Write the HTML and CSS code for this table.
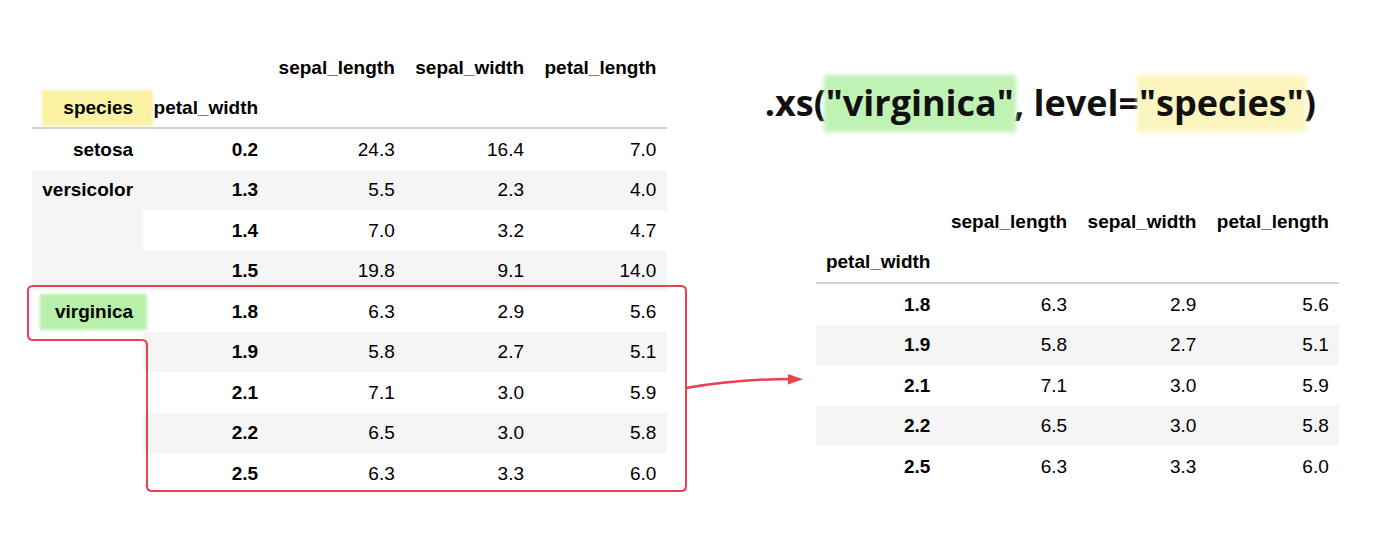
FILE: index.html
```html
<!DOCTYPE html>
<html lang="en">
<head>
<meta charset="utf-8">
<title>xs virginica</title>
<link rel="stylesheet" href="styles.css">
</head>
<body>
<main class="stage">
  <section class="left">
    <table class="df">
      <thead>
        <tr class="hdr1">
          <th></th><th></th>
          <th>sepal_length</th><th>sepal_width</th><th>petal_length</th>
        </tr>
        <tr class="hdr2">
          <th><span class="hl hl-yellow">species</span></th><th>petal_width</th>
          <th></th><th></th><th></th>
        </tr>
      </thead>
      <tbody>
        <tr><th>setosa</th><th>0.2</th><td>24.3</td><td>16.4</td><td>7.0</td></tr>
        <tr><th rowspan="3" class="span">versicolor</th><th>1.3</th><td>5.5</td><td>2.3</td><td>4.0</td></tr>
        <tr><th>1.4</th><td>7.0</td><td>3.2</td><td>4.7</td></tr>
        <tr><th>1.5</th><td>19.8</td><td>9.1</td><td>14.0</td></tr>
        <tr><th rowspan="5" class="span"><span class="hl hl-green">virginica</span></th><th>1.8</th><td>6.3</td><td>2.9</td><td>5.6</td></tr>
        <tr><th>1.9</th><td>5.8</td><td>2.7</td><td>5.1</td></tr>
        <tr><th>2.1</th><td>7.1</td><td>3.0</td><td>5.9</td></tr>
        <tr><th>2.2</th><td>6.5</td><td>3.0</td><td>5.8</td></tr>
        <tr><th>2.5</th><td>6.3</td><td>3.3</td><td>6.0</td></tr>
      </tbody>
    </table>
  </section>

  <section class="right">
    <div class="code">.xs(<span class="chl chl-green">"virginica"</span>, level=<span class="chl chl-yellow">"species"</span>)</div>
    <table class="df df-right">
      <thead>
        <tr class="hdr1">
          <th></th>
          <th>sepal_length</th><th>sepal_width</th><th>petal_length</th>
        </tr>
        <tr class="hdr2">
          <th>petal_width</th><th></th><th></th><th></th>
        </tr>
      </thead>
      <tbody>
        <tr><th>1.8</th><td>6.3</td><td>2.9</td><td>5.6</td></tr>
        <tr><th>1.9</th><td>5.8</td><td>2.7</td><td>5.1</td></tr>
        <tr><th>2.1</th><td>7.1</td><td>3.0</td><td>5.9</td></tr>
        <tr><th>2.2</th><td>6.5</td><td>3.0</td><td>5.8</td></tr>
        <tr><th>2.5</th><td>6.3</td><td>3.3</td><td>6.0</td></tr>
      </tbody>
    </table>
  </section>

  <svg class="annot" width="1400" height="536" viewBox="0 0 1400 536" aria-hidden="true">
    <path d="M33 286 H681 Q686 286 686 291 V486 Q686 491 681 491 H152 Q147 491 147 486 V345 Q147 340 142 340 H33 Q28 340 28 335 V291 Q28 286 33 286 Z" fill="none" stroke="#e8424f" stroke-width="2"/>
    <path d="M686 388 C715 383 745 379 790 379" fill="none" stroke="#e8424f" stroke-width="2.5"/>
    <polygon points="788,374 803,379.3 788,384.5" fill="#e8424f"/>
  </svg>
</main>
</body>
</html>
```

FILE: styles.css
```css
html, body {
  margin: 0;
  padding: 0;
  background: #ffffff;
}

.stage {
  position: relative;
  display: flex;
  align-items: flex-start;
  width: 1400px;
  height: 536px;
  box-sizing: border-box;
  padding: 47px 0 0 32px;
  font-family: "Liberation Sans", Arial, sans-serif;
  color: #000;
  overflow: hidden;
}

.df {
  border-collapse: collapse;
  border-spacing: 0;
  font-size: 19px;
}

.df th,
.df td {
  text-align: right;
  white-space: nowrap;
  padding: 9.75px 10.25px;
  line-height: 21px;
  vertical-align: middle;
}

.df thead th {
  font-weight: bold;
  padding-top: 9.5px;
  padding-bottom: 9.5px;
}

.df thead {
  border-bottom: 2px solid #d2d2d2;
}

.df tbody th {
  font-weight: bold;
}

.df td {
  font-weight: normal;
}

.df th.span {
  vertical-align: top;
}

.df tbody tr:nth-child(odd) {
  background: #ffffff;
}

.df tbody tr:nth-child(even) {
  background: #f5f5f5;
}

/* highlighted index labels */
.hl {
  position: relative;
  z-index: 0;
}

.hl::before {
  content: "";
  position: absolute;
  z-index: -1;
  filter: blur(1.5px);
}

.hl-yellow::before {
  left: -21px;
  right: -20px;
  top: -7px;
  bottom: -8px;
  background: #fbf2a4;
}

.hl-green::before {
  left: -15px;
  right: -14px;
  top: -7px;
  bottom: -8px;
  background: #b6f0aa;
}

.right {
  margin-left: 98px;
  display: flex;
  flex-direction: column;
}

.code {
  margin-top: 34px;
  font-family: "Open Sans", "DejaVu Sans", sans-serif;
  font-weight: 700;
  font-size: 36px;
  line-height: 43px;
  color: #111;
  white-space: nowrap;
}

.chl {
  position: relative;
  z-index: 0;
}

.chl::before {
  content: "";
  position: absolute;
  z-index: -1;
  left: -2px;
  right: -2px;
  top: -3px;
  bottom: -5px;
  filter: blur(2px);
}

.chl-green::before {
  background: #bff2b3;
}

.chl-yellow::before {
  background: #fcf5c0;
}

.df-right {
  margin-top: 77px;
  margin-left: 51px;
}

.df-right thead th {
  padding-top: 9.75px;
  padding-bottom: 9.75px;
}

.annot {
  position: absolute;
  left: 0;
  top: 0;
  pointer-events: none;
}
```
